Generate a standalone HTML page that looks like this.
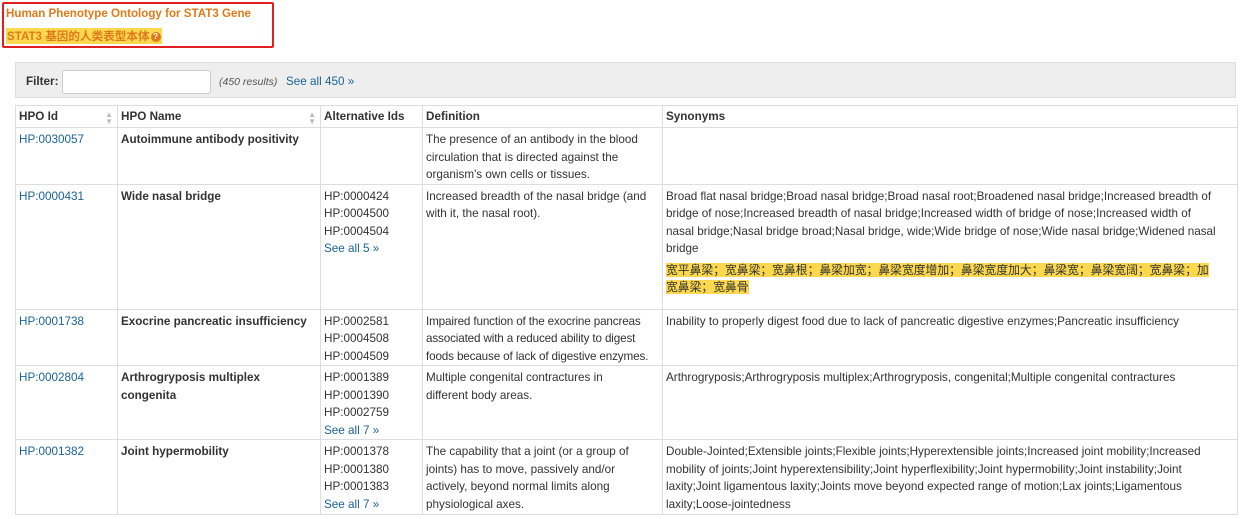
<!DOCTYPE html>
<html><head><meta charset="utf-8"><style>
body{margin:0;background:#fff;font-family:"Liberation Sans","Noto Sans CJK SC",sans-serif;font-size:11.7px;color:#333;width:1240px;height:519px;overflow:hidden;position:relative}
.box{position:absolute;left:2px;top:2px;width:268px;height:42px;border:2px solid #e02020;border-radius:2px}
.t1{position:absolute;left:6px;top:7px;font-size:11.6px;font-weight:bold;color:#e07a1a}
.t2{position:absolute;left:6px;top:28px;font-size:11.6px;font-weight:bold;color:#e07a1a;background:#fbd84e;padding:0 1px}
.q{display:inline-block;width:10px;height:10px;border-radius:50%;background:#e07a1a;color:#fff;font-size:8px;line-height:10px;text-align:center;vertical-align:1px;margin-left:1px}
.fb{position:absolute;left:15px;top:62px;width:1221px;height:36px;background:#eee;border:1px solid #ddd;box-sizing:border-box}
.fb b{position:absolute;left:10px;top:12px;color:#333}
.fb .in{position:absolute;left:46px;top:7px;width:147px;height:22px;background:#fff;border:1px solid #ccc;border-radius:3px}
.fb i{position:absolute;left:203px;top:13px;font-size:10.5px;color:#555}
.fb a{position:absolute;left:270px;top:12px;color:#1a6496}
table{position:absolute;left:15px;top:105px;border-collapse:collapse;table-layout:fixed;width:1222px}
td,th{border:1px solid #ddd;vertical-align:top;padding:3px 3px 0;line-height:17.5px;text-align:left;overflow:hidden;white-space:nowrap}
th{font-weight:bold;height:19px;padding:2px 3px 0;position:relative}
td b{color:#333}
a{color:#1a6496;text-decoration:none}
.s{position:absolute;right:4px;top:5px;color:#bbb;font-size:8px;line-height:7px}
.hl{background:#fbd84e;line-height:17.5px}
</style></head><body>
<div class="box"></div>
<div class="t1">Human Phenotype Ontology for STAT3 Gene</div>
<div class="t2">STAT3 基因的人类表型本体<span class="q">?</span></div>
<div class="fb"><b>Filter:</b><div class="in"></div><i>(450 results)</i><a>See all 450 »</a></div>
<table>
<colgroup><col style="width:102px"><col style="width:203px"><col style="width:102px"><col style="width:240px"><col style="width:575px"></colgroup>
<tr><th>HPO Id<span class="s">▲<br>▼</span></th><th>HPO Name<span class="s">▲<br>▼</span></th><th>Alternative Ids</th><th>Definition</th><th>Synonyms</th></tr>
<tr style="height:56px"><td><a>HP:0030057</a></td><td><b>Autoimmune antibody positivity</b></td><td></td><td>The presence of an antibody in the blood<br>circulation that is directed against the<br>organism's own cells or tissues.</td><td></td></tr>
<tr style="height:125px"><td><a>HP:0000431</a></td><td><b>Wide nasal bridge</b></td><td>HP:0000424<br>HP:0004500<br>HP:0004504<br><a>See all 5 »</a></td><td>Increased breadth of the nasal bridge (and<br>with it, the nasal root).</td><td>Broad flat nasal bridge;Broad nasal bridge;Broad nasal root;Broadened nasal bridge;Increased breadth of<br>bridge of nose;Increased breadth of nasal bridge;Increased width of bridge of nose;Increased width of<br>nasal bridge;Nasal bridge broad;Nasal bridge, wide;Wide bridge of nose;Wide nasal bridge;Widened nasal<br>bridge<div style="margin-top:4px;font-size:11.8px"><span class="hl">宽平鼻梁；宽鼻梁；宽鼻根；鼻梁加宽；鼻梁宽度增加；鼻梁宽度加大；鼻梁宽；鼻梁宽阔；宽鼻梁；加</span><br><span class="hl">宽鼻梁；宽鼻骨</span></div></td></tr>
<tr style="height:55px"><td><a>HP:0001738</a></td><td><b>Exocrine pancreatic insufficiency</b></td><td>HP:0002581<br>HP:0004508<br>HP:0004509</td><td style="letter-spacing:-0.15px">Impaired function of the exocrine pancreas<br>associated with a reduced ability to digest<br>foods because of lack of digestive enzymes.</td><td>Inability to properly digest food due to lack of pancreatic digestive enzymes;Pancreatic insufficiency</td></tr>
<tr style="height:73px"><td><a>HP:0002804</a></td><td><b>Arthrogryposis multiplex<br>congenita</b></td><td>HP:0001389<br>HP:0001390<br>HP:0002759<br><a>See all 7 »</a></td><td>Multiple congenital contractures in<br>different body areas.</td><td>Arthrogryposis;Arthrogryposis multiplex;Arthrogryposis, congenital;Multiple congenital contractures</td></tr>
<tr style="height:75px"><td><a>HP:0001382</a></td><td><b>Joint hypermobility</b></td><td>HP:0001378<br>HP:0001380<br>HP:0001383<br><a>See all 7 »</a></td><td>The capability that a joint (or a group of<br>joints) has to move, passively and/or<br>actively, beyond normal limits along<br>physiological axes.</td><td>Double-Jointed;Extensible joints;Flexible joints;Hyperextensible joints;Increased joint mobility;Increased<br>mobility of joints;Joint hyperextensibility;Joint hyperflexibility;Joint hypermobility;Joint instability;Joint<br>laxity;Joint ligamentous laxity;Joints move beyond expected range of motion;Lax joints;Ligamentous<br>laxity;Loose-jointedness</td></tr>
</table>
</body></html>
